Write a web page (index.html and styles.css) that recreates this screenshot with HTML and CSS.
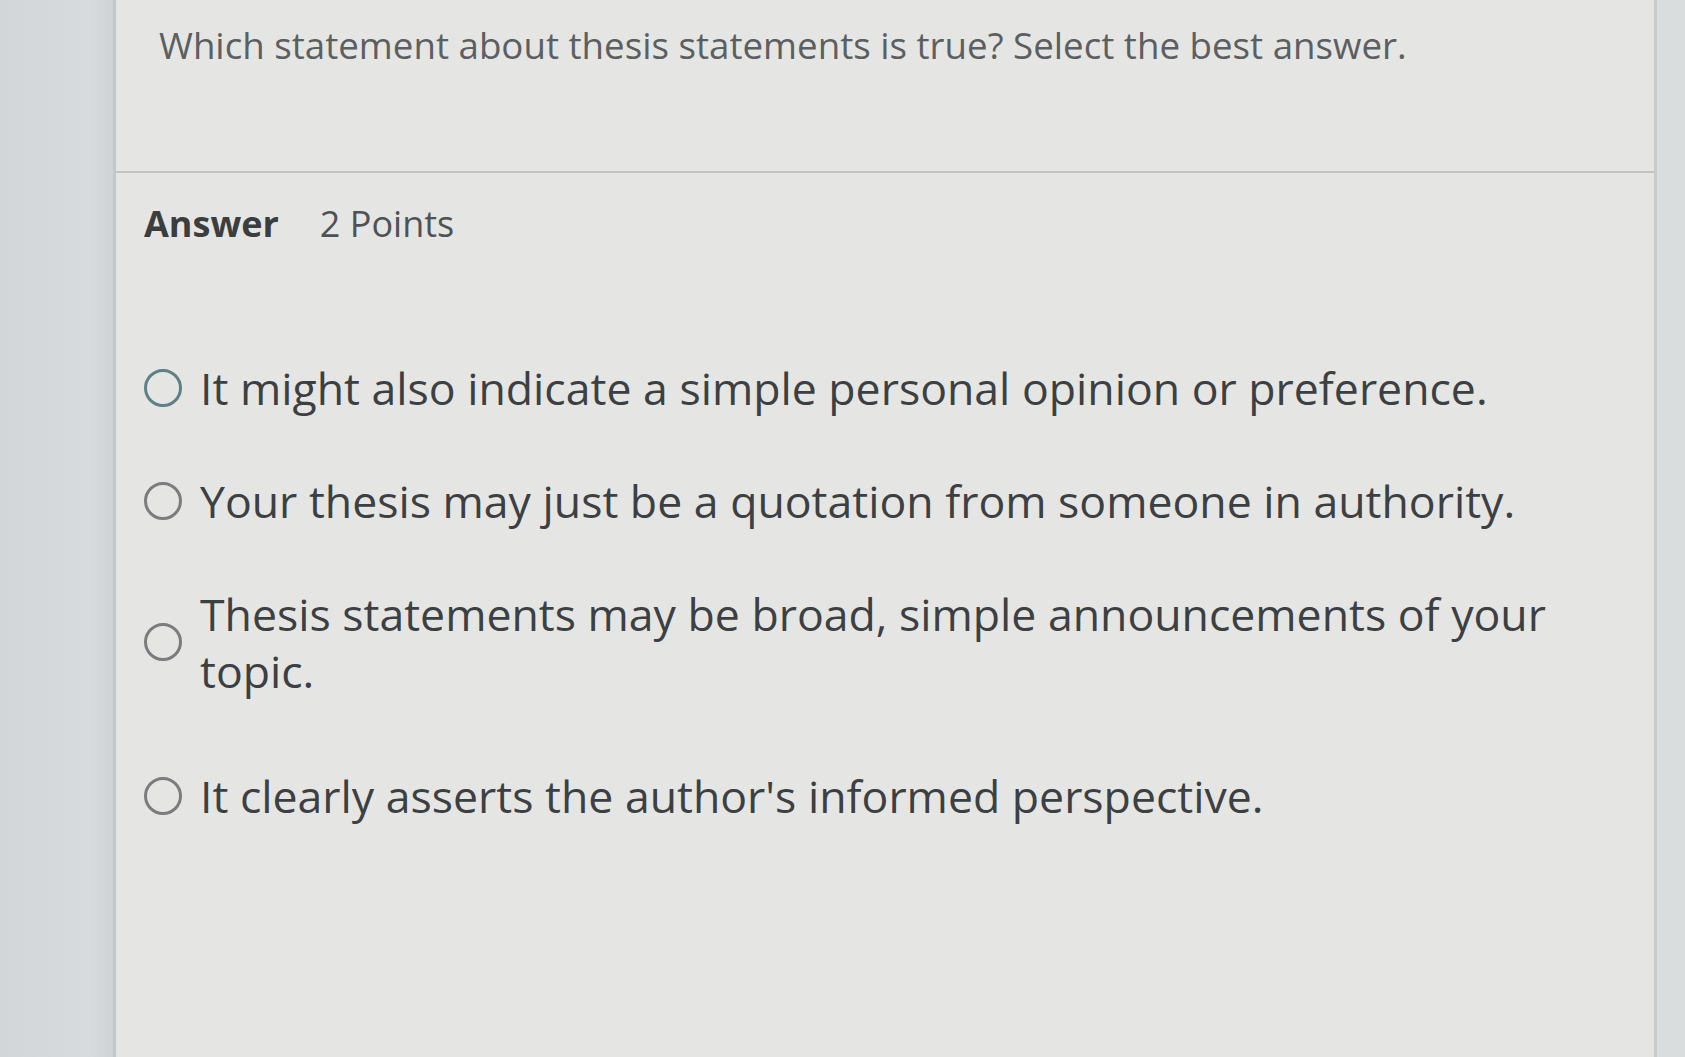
FILE: index.html
```html
<!DOCTYPE html>
<html lang="en">
<head>
<meta charset="utf-8">
<title>Question</title>
<link rel="stylesheet" href="styles.css">
</head>
<body>
<div class="page">
  <div class="side side-left"></div>
  <main class="card">
    <section class="question">
      <h1 class="question-text">Which statement about thesis statements is true? Select the best answer.</h1>
    </section>
    <section class="answer">
      <div class="answer-head">
        <span class="answer-label">Answer</span>
        <span class="answer-points">2 Points</span>
      </div>
      <ul class="options">
        <li class="option">
          <span class="radio radio-focus"></span>
          <span class="option-text">It might also indicate a simple personal opinion or preference.</span>
        </li>
        <li class="option">
          <span class="radio"></span>
          <span class="option-text">Your thesis may just be a quotation from someone in authority.</span>
        </li>
        <li class="option">
          <span class="radio"></span>
          <span class="option-text">Thesis statements may be broad, simple announcements of your topic.</span>
        </li>
        <li class="option option-last">
          <span class="radio"></span>
          <span class="option-text">It clearly asserts the author's informed perspective.</span>
        </li>
      </ul>
    </section>
  </main>
  <div class="side side-right"></div>
</div>
</body>
</html>
```

FILE: styles.css
```css
html, body {
  margin: 0;
  padding: 0;
  height: 100%;
}
body {
  font-family: "Open Sans", "Noto Sans", sans-serif;
  background: #e2e4e3;
  overflow: hidden;
}
.page {
  display: flex;
  height: 1057px;
}
.side {
  flex: none;
}
.side-left {
  width: 113px;
  background: linear-gradient(90deg, #d2d6d9 0%, #d8dbdd 80%, #cfd2d4 100%);
  border-right: 3px solid #c4c8ca;
}
.side-right {
  width: 28px;
  background: #dadddd;
  border-left: 3px solid #c8cbcb;
}
.card {
  flex: 1;
  background: #e5e6e4;
  display: flex;
  flex-direction: column;
}
.question {
  height: 144px;
  padding: 27px 0 0 43px;
  border-bottom: 2px solid #c2c4c3;
}
.question-text {
  margin: 0;
  font-size: 36.7px;
  line-height: 1;
  font-weight: 400;
  color: #5c5f61;
}
.answer {
  padding: 33px 0 0 28px;
}
.answer-head {
  display: flex;
  gap: 41px;
  line-height: 1;
  font-size: 36px;
}
.answer-label {
  font-weight: 700;
  color: #3b3d3e;
}
.answer-points {
  color: #4f5254;
}
.options {
  list-style: none;
  margin: 117px 0 0 0;
  padding: 0;
  display: flex;
  flex-direction: column;
  gap: 56px;
}
.option {
  display: flex;
  align-items: center;
  gap: 18px;
  max-width: 1420px;
}
.option-last {
  margin-top: 12px;
}
.radio {
  flex: none;
  border: 3px solid #7a7c7d;
  border-radius: 50%;
  box-sizing: content-box;
  width: 32px;
  height: 32px;
}
.radio-focus {
  border-color: #5e8088;
}
.option-text {
  font-size: 44.6px;
  line-height: 57px;
  color: #3d4042;
}
```
